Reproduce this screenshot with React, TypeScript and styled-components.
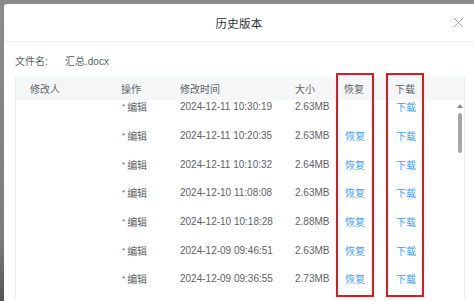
import React from "react";
import styled, { createGlobalStyle } from "styled-components";

const FONT = '"Liberation Sans", "Noto Sans CJK SC", Arial, sans-serif';

const GlobalStyle = createGlobalStyle`
  html, body {
    margin: 0;
    padding: 0;
    height: 301px;
    overflow: hidden;
  }
  body {
    font-family: ${FONT};
  }
`;

const Overlay = styled.div`
  position: relative;
  height: 301px;
  background: linear-gradient(to bottom, #8c8c8c 0%, #7c7c7c 80%, #555 100%);
  padding: 4px 0 0 4px;
  box-sizing: border-box;
  overflow: hidden;
`;

const Dialog = styled.div`
  background: #fff;
  border-radius: 3px 0 0 0;
  height: 297px;
  display: flex;
  flex-direction: column;
`;

const Header = styled.div`
  position: relative;
  height: 37px;
  flex: none;
  display: flex;
  align-items: center;
  justify-content: center;
  border-bottom: 1px solid #ececec;
`;

const Title = styled.div`
  font-size: 11.5px;
  color: #303133;
  letter-spacing: 0.2px;
`;

const Close = styled.div`
  position: absolute;
  right: 10px;
  top: 13px;
  width: 11px;
  height: 11px;
  display: flex;
  color: #a8a8a8;
`;

const Body = styled.div`
  flex: 1;
  min-height: 0;
  padding: 0 9px 0 11px;
  display: flex;
  flex-direction: column;
`;

const FileRow = styled.div`
  display: flex;
  align-items: center;
  height: 35px;
  padding-top: 1px;
  font-size: 10px;
  color: #606266;
  box-sizing: border-box;
`;

const FileLabel = styled.span`
  width: 50px;
`;

const Table = styled.div`
  flex: 1;
  min-height: 0;
  display: flex;
  flex-direction: column;
  border-left: 1px solid #eef0f4;
  border-right: 1px solid #eef0f4;
`;

const COLS = "105px 59px 115px 49px 51px 1fr";

const HeadRow = styled.div`
  display: grid;
  grid-template-columns: ${COLS};
  height: 23px;
  align-items: center;
  background: #f5f6f8;
  font-size: 10px;
  color: #606266;
  flex: none;
`;

const HeadCell = styled.div<{ $pad?: number }>`
  padding-left: ${(p) => p.$pad ?? 0}px;
  white-space: nowrap;
`;

const Scroller = styled.div`
  flex: 1;
  min-height: 0;
  display: flex;
`;

const Rows = styled.div`
  flex: 1;
  overflow: hidden;
`;

const RowsInner = styled.div`
  margin-top: -7.6px;
`;

const Row = styled.div`
  display: grid;
  grid-template-columns: ${COLS};
  height: 28.7px;
  align-items: center;
  font-size: 10px;
  color: #606266;
`;

const Cell = styled.div<{ $pad?: number }>`
  padding-left: ${(p) => p.$pad ?? 0}px;
  white-space: nowrap;
`;

const Star = styled.span`
  font-size: 8px;
  vertical-align: 2px;
  margin: 0 2px 0 1px;
`;

const Link = styled.span`
  color: #409eff;
  cursor: pointer;
`;

const Track = styled.div`
  width: 9px;
  flex: none;
  display: flex;
  flex-direction: column;
  align-items: center;
  padding-top: 4px;
`;

const Arrow = styled.div`
  width: 0;
  height: 0;
  border-left: 3px solid transparent;
  border-right: 3px solid transparent;
  border-bottom: 4px solid #8a8a8a;
`;

const Thumb = styled.div`
  margin-top: 5px;
  width: 4px;
  height: 40px;
  border-radius: 2px;
  background: #a6a6a6;
`;

const Mark = styled.div<{ $left: number; $width: number }>`
  position: absolute;
  left: ${(p) => p.$left}px;
  top: 73px;
  width: ${(p) => p.$width}px;
  height: 224px;
  border: 2px solid #e01822;
  box-sizing: border-box;
  pointer-events: none;
`;

interface Version {
  time: string;
  size: string;
  restorable: boolean;
}

const versions: Version[] = [
  { time: "2024-12-11 10:30:19", size: "2.63MB", restorable: false },
  { time: "2024-12-11 10:20:35", size: "2.63MB", restorable: true },
  { time: "2024-12-11 10:10:32", size: "2.64MB", restorable: true },
  { time: "2024-12-10 11:08:08", size: "2.63MB", restorable: true },
  { time: "2024-12-10 10:18:28", size: "2.88MB", restorable: true },
  { time: "2024-12-09 09:46:51", size: "2.63MB", restorable: true },
  { time: "2024-12-09 09:36:55", size: "2.73MB", restorable: true },
];

const App: React.FC = () => {
  return (
    <>
      <GlobalStyle />
      <Overlay>
        <Dialog>
          <Header>
            <Title>历史版本</Title>
            <Close>
              <svg width="11" height="11" viewBox="0 0 11 11">
                <path d="M1 1 L10 10 M10 1 L1 10" stroke="currentColor" strokeWidth="1" fill="none" />
              </svg>
            </Close>
          </Header>
          <Body>
            <FileRow>
              <FileLabel>文件名:</FileLabel>
              <span>汇总.docx</span>
            </FileRow>
            <Table>
              <HeadRow>
                <HeadCell $pad={14}>修改人</HeadCell>
                <HeadCell>操作</HeadCell>
                <HeadCell>修改时间</HeadCell>
                <HeadCell>大小</HeadCell>
                <HeadCell>恢复</HeadCell>
                <HeadCell>下载</HeadCell>
              </HeadRow>
              <Scroller>
                <Rows>
                  <RowsInner>
                    {versions.map((v) => (
                      <Row key={v.time}>
                        <Cell $pad={14}></Cell>
                        <Cell>
                          <Star>*</Star>编辑
                        </Cell>
                        <Cell>{v.time}</Cell>
                        <Cell>{v.size}</Cell>
                        <Cell $pad={1}>{v.restorable && <Link>恢复</Link>}</Cell>
                        <Cell $pad={1}>
                          <Link>下载</Link>
                        </Cell>
                      </Row>
                    ))}
                  </RowsInner>
                </Rows>
                <Track>
                  <Arrow />
                  <Thumb />
                </Track>
              </Scroller>
            </Table>
          </Body>
        </Dialog>
        <Mark $left={336} $width={38} />
        <Mark $left={386} $width={38} />
      </Overlay>
    </>
  );
};

export default App;
